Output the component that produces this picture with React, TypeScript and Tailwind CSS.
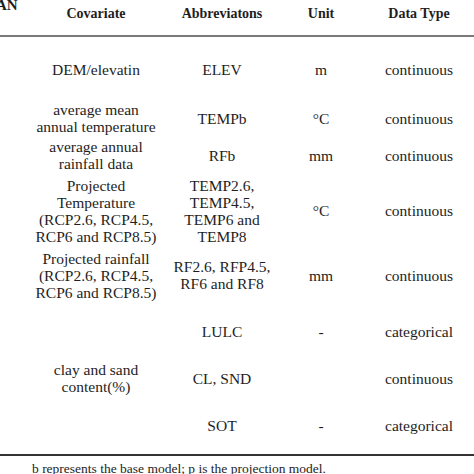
import React from "react";

const rows: { h: string; c: string[]; a: string[]; u: string; t: string }[] = [
  { h: "h-[64px]", c: ["DEM/elevatin"], a: ["ELEV"], u: "m", t: "continuous" },
  { h: "h-[33px]", c: ["average mean", "annual temperature"], a: ["TEMPb"], u: "°C", t: "continuous" },
  { h: "h-[42px]", c: ["average annual", "rainfall data"], a: ["RFb"], u: "mm", t: "continuous" },
  {
    h: "h-[69px]",
    c: ["Projected", "Temperature", "(RCP2.6, RCP4.5,", "RCP6 and RCP8.5)"],
    a: ["TEMP2.6,", "TEMP4.5,", "TEMP6 and", "TEMP8"],
    u: "°C",
    t: "continuous",
  },
  {
    h: "h-[60px]",
    c: ["Projected rainfall", "(RCP2.6, RCP4.5,", "RCP6 and RCP8.5)"],
    a: ["RF2.6, RFP4.5,", "RF6 and RF8"],
    u: "mm",
    t: "continuous",
  },
  { h: "h-[52px]", c: [""], a: ["LULC"], u: "-", t: "categorical" },
  { h: "h-[42px]", c: ["clay and sand", "content(%)"], a: ["CL, SND"], u: "", t: "continuous" },
  { h: "h-[52px]", c: [""], a: ["SOT"], u: "-", t: "categorical" },
];

function Lines({ l }: { l: string[] }) {
  return (
    <div className="flex flex-col items-center text-center whitespace-nowrap">
      {l.map((x, i) => (
        <span key={i}>{x}</span>
      ))}
    </div>
  );
}

export default function App() {
  return (
    <div
      className="w-[474px] h-[474px] overflow-hidden bg-white text-[#1e1e1e]"
      style={{ fontFamily: '"Liberation Serif", "Times New Roman", serif' }}
    >
      <div className="grid grid-cols-[20px_152px_100px_98px_98px] h-[35px] text-[14px] font-bold leading-[18px]">
        <div className="-mt-[2px] -ml-[4px] text-[15px] leading-[15px] whitespace-nowrap">AN</div>
        <div className="pt-[5px] text-center">Covariate</div>
        <div className="pt-[5px] text-center">Abbreviatons</div>
        <div className="pt-[5px] text-center">Unit</div>
        <div className="pt-[5px] text-center">Data Type</div>
      </div>
      <div className="h-[2px] bg-[#7a7a7a]" />
      {rows.map((r, i) => (
        <div
          key={i}
          className={`grid grid-cols-[20px_152px_100px_98px_98px] items-center text-[15.5px] leading-[17px] ${r.h}`}
        >
          <div />
          <Lines l={r.c} />
          <Lines l={r.a} />
          <div className="text-center">{r.u}</div>
          <div className="text-center">{r.t}</div>
        </div>
      ))}
      <div className="mt-[3px] h-[2px] bg-[#333]" />
      <div className="pl-[32px] pt-[4px] text-[13.5px] leading-[17px] whitespace-nowrap">
        b represents the base model; p is the projection model.
      </div>
    </div>
  );
}
